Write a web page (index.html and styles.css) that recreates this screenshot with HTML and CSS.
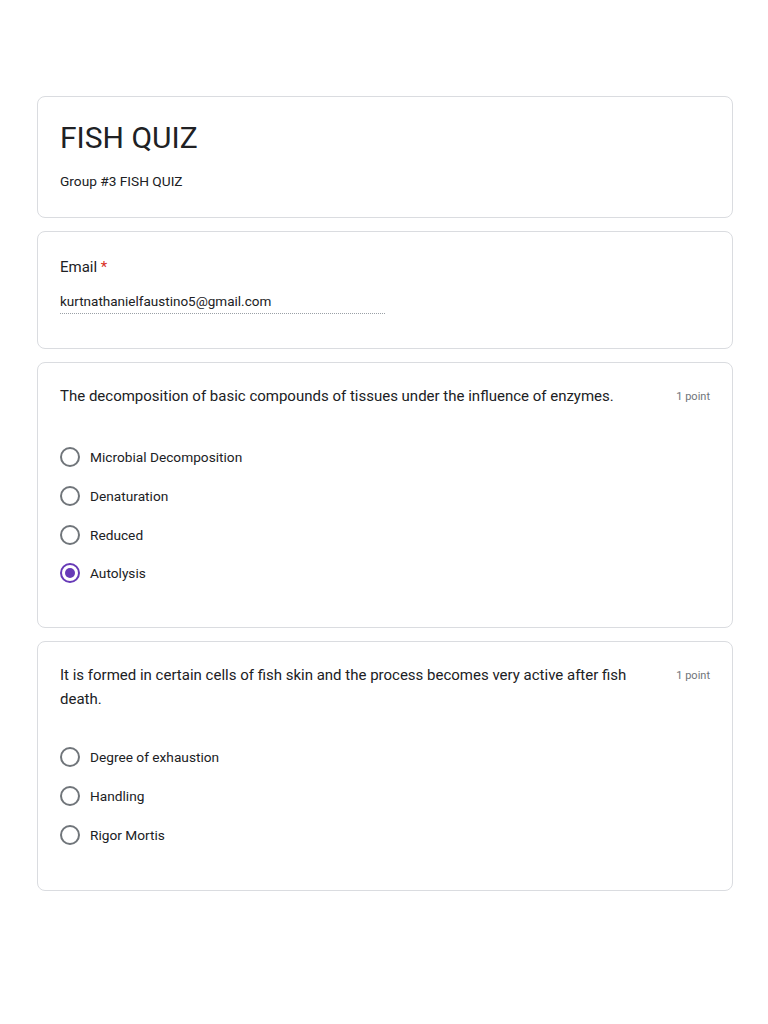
FILE: index.html
```html
<!DOCTYPE html>
<html lang="en">
<head>
<meta charset="utf-8">
<title>FISH QUIZ</title>
<link rel="stylesheet" href="styles.css">
</head>
<body>
<main class="form">
  <section class="card header-card">
    <h1 class="title">FISH QUIZ</h1>
    <p class="subtitle">Group #3 FISH QUIZ</p>
  </section>

  <section class="card email-card">
    <div class="label">Email <span class="req">*</span></div>
    <div class="email-value">kurtnathanielfaustino5@gmail.com</div>
  </section>

  <section class="card question q1">
    <div class="q-head">
      <div class="q-text">The decomposition of basic compounds of tissues under the influence of enzymes.</div>
      <div class="points">1 point</div>
    </div>
    <div class="options">
      <div class="option"><span class="radio"></span><span class="opt-label">Microbial Decomposition</span></div>
      <div class="option"><span class="radio"></span><span class="opt-label">Denaturation</span></div>
      <div class="option"><span class="radio"></span><span class="opt-label">Reduced</span></div>
      <div class="option"><span class="radio checked"></span><span class="opt-label">Autolysis</span></div>
    </div>
  </section>

  <section class="card question q2">
    <div class="q-head">
      <div class="q-text">It is formed in certain cells of fish skin and the process becomes very active after fish death.</div>
      <div class="points">1 point</div>
    </div>
    <div class="options">
      <div class="option"><span class="radio"></span><span class="opt-label">Degree of exhaustion</span></div>
      <div class="option"><span class="radio"></span><span class="opt-label">Handling</span></div>
      <div class="option"><span class="radio"></span><span class="opt-label">Rigor Mortis</span></div>
    </div>
  </section>
</main>
</body>
</html>
```
FILE: styles.css
```css
* { box-sizing: border-box; }
html, body { margin: 0; padding: 0; background: #fff; }
body {
  font-family: Roboto, "Liberation Sans", Arial, sans-serif;
  color: #202124;
}
.form {
  width: 696px;
  margin-left: 37px;
  padding-top: 96px;
  display: flex;
  flex-direction: column;
  gap: 13px;
}
.card {
  border: 1px solid #dadce0;
  border-radius: 8px;
  background: #fff;
  padding-left: 22px;
  padding-right: 22px;
}
.header-card { padding-top: 21px; padding-bottom: 26px; }
.title {
  margin: 0;
  font-size: 30px;
  font-weight: 400;
  line-height: 40px;
}
.subtitle {
  margin: 13px 0 0;
  font-size: 13.7px;
  line-height: 20px;
}
.email-card { padding-top: 23px; padding-bottom: 34px; }
.label { font-size: 15px; line-height: 24px; }
.req { color: #d93025; }
.email-value {
  margin-top: 12px;
  width: 325px;
  font-size: 13.5px;
  line-height: 20px;
  padding-bottom: 2px;
  border-bottom: 1px dotted #9aa0a6;
}
.question { padding-top: 21px; padding-bottom: 34px; }
.q2 { padding-bottom: 36px; }
.q-head { display: flex; align-items: flex-start; gap: 24px; }
.q-text { flex: 1; font-size: 15px; line-height: 24px; }
.points {
  font-size: 11px;
  line-height: 24px;
  color: #70757a;
  white-space: nowrap;
  padding-top: 1px;
}
.q1 .options { margin-top: 29px; }
.q1 .option { height: 38.67px; }
.q2 .options { margin-top: 27px; }
.q2 .option { height: 38.8px; }
.option {
  display: flex;
  align-items: center;
}
.radio {
  width: 20px;
  height: 20px;
  border: 2px solid #70757a;
  border-radius: 50%;
  margin-right: 10px;
  display: flex;
  align-items: center;
  justify-content: center;
  flex: none;
}
.radio.checked { border-color: #673ab7; }
.radio.checked::after {
  content: "";
  width: 10px;
  height: 10px;
  border-radius: 50%;
  background: #673ab7;
}
.opt-label { font-size: 13.7px; line-height: 20px; }
```
